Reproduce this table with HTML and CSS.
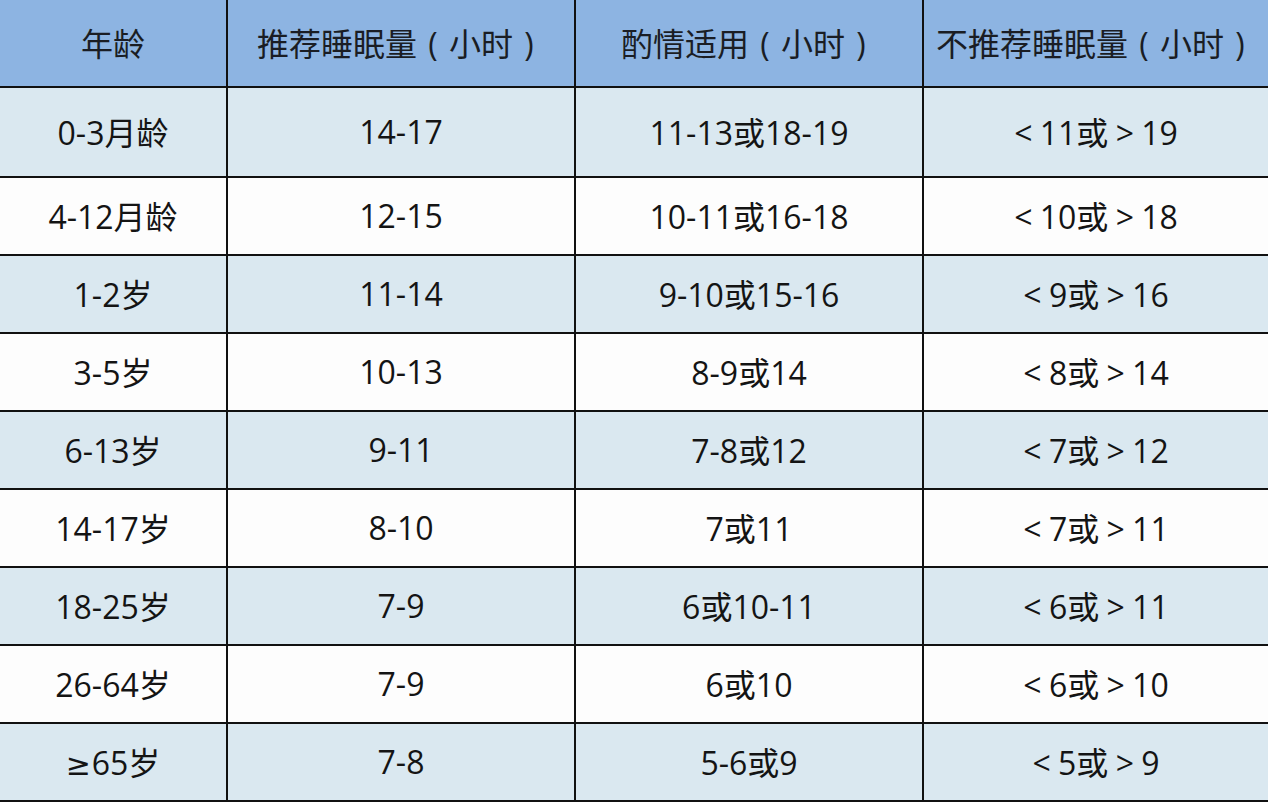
FILE: index.html
```html
<!DOCTYPE html>
<html lang="zh-CN">
<head>
<meta charset="utf-8">
<title>睡眠时间推荐</title>
<link rel="stylesheet" href="styles.css">
</head>
<body>
<div class="table">
  <div class="row head">
    <div class="cell"><span>年龄</span></div>
    <div class="cell"><span>推荐睡眠量<span class="paren">(</span>小时<span class="paren">)</span></span></div>
    <div class="cell"><span>酌情适用<span class="paren">(</span>小时<span class="paren">)</span></span></div>
    <div class="cell"><span>不推荐睡眠量<span class="paren">(</span>小时<span class="paren">)</span></span></div>
  </div>
  <div class="row first tint">
    <div class="cell">0-3月龄</div>
    <div class="cell">14-17</div>
    <div class="cell">11-13或18-19</div>
    <div class="cell cmp">&lt; 11或 &gt; 19</div>
  </div>
  <div class="row">
    <div class="cell">4-12月龄</div>
    <div class="cell">12-15</div>
    <div class="cell">10-11或16-18</div>
    <div class="cell cmp">&lt; 10或 &gt; 18</div>
  </div>
  <div class="row tint">
    <div class="cell">1-2岁</div>
    <div class="cell">11-14</div>
    <div class="cell">9-10或15-16</div>
    <div class="cell cmp">&lt; 9或 &gt; 16</div>
  </div>
  <div class="row">
    <div class="cell">3-5岁</div>
    <div class="cell">10-13</div>
    <div class="cell">8-9或14</div>
    <div class="cell cmp">&lt; 8或 &gt; 14</div>
  </div>
  <div class="row tint">
    <div class="cell">6-13岁</div>
    <div class="cell">9-11</div>
    <div class="cell">7-8或12</div>
    <div class="cell cmp">&lt; 7或 &gt; 12</div>
  </div>
  <div class="row">
    <div class="cell">14-17岁</div>
    <div class="cell">8-10</div>
    <div class="cell">7或11</div>
    <div class="cell cmp">&lt; 7或 &gt; 11</div>
  </div>
  <div class="row tint">
    <div class="cell">18-25岁</div>
    <div class="cell">7-9</div>
    <div class="cell">6或10-11</div>
    <div class="cell cmp">&lt; 6或 &gt; 11</div>
  </div>
  <div class="row">
    <div class="cell">26-64岁</div>
    <div class="cell">7-9</div>
    <div class="cell">6或10</div>
    <div class="cell cmp">&lt; 6或 &gt; 10</div>
  </div>
  <div class="row tint">
    <div class="cell"><span><span class="sym">≥</span>65岁</span></div>
    <div class="cell">7-8</div>
    <div class="cell">5-6或9</div>
    <div class="cell cmp">&lt; 5或 &gt; 9</div>
  </div>
</div>
</body>
</html>
```
FILE: styles.css
```css
html, body {
  margin: 0;
  padding: 0;
  background: #ffffff;
}
body {
  font-family: "Open Sans", "Noto Sans CJK SC", sans-serif;
  font-size: 32px;
  font-weight: 400;
  color: #141414;
}
.table {
  width: 1268px;
  display: flex;
  flex-direction: column;
}
.row {
  display: grid;
  grid-template-columns: 228px 348px 348px 344px;
  height: 78px;
  background: #fdfdfd;
}
.row.head {
  height: 88px;
  background: #8db4e2;
  color: #1a1d24;
}
.row.first {
  height: 90px;
}
.row.tint {
  background: #dae8f0;
}
.cell {
  box-sizing: border-box;
  display: flex;
  align-items: center;
  justify-content: center;
  border-right: 2px solid #111111;
  border-bottom: 2px solid #111111;
  white-space: nowrap;
  padding-bottom: 2px;
}
.cell:last-child {
  border-right: none;
}
.cmp {
  word-spacing: -1px;
}
.paren {
  display: inline-block;
  width: 32px;
  text-align: center;
}
.sym {
  font-family: "DejaVu Sans", sans-serif;
  font-size: 30px;
  margin-right: 1px;
}
```
